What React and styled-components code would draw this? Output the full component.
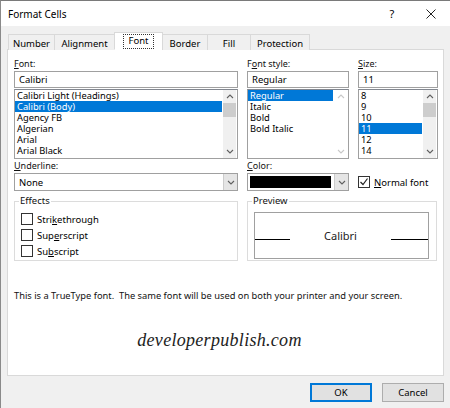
import React from "react";
import styled, { createGlobalStyle } from "styled-components";

const GlobalStyle = createGlobalStyle`
  html, body {
    margin: 0;
    padding: 0;
    background: #f0f0f0;
  }
  body {
    font-family: "Noto Sans", "DejaVu Sans", sans-serif;
    font-size: 9px;
    color: #000;
  }
`;

const Window = styled.div`
  width: 450px;
  height: 408px;
  box-sizing: border-box;
  border-top: 1px solid #7a7a7a;
  border-left: 1px solid #8a8a8a;
  background: #f0f0f0;
  display: flex;
  flex-direction: column;
`;

const TitleBar = styled.div`
  height: 25px;
  background: #fff;
  display: flex;
  align-items: center;
  padding: 0 12px 0 7px;
  font-size: 10px;
`;

const Title = styled.div`
  flex: 1;
`;

const TitleButton = styled.div`
  width: 14px;
  display: flex;
  justify-content: center;
  margin-left: ${(p) => p.gap || 0}px;
  font-size: 11px;
`;

const Body = styled.div`
  flex: 1;
  padding: 6px 6px 0 6px;
  display: flex;
  flex-direction: column;
`;

const TabStrip = styled.div`
  display: flex;
  align-items: flex-end;
  height: 18px;
  padding-left: 1px;
  position: relative;
  z-index: 1;
`;

const Tab = styled.div`
  width: ${(p) => p.w}px;
  height: ${(p) => (p.active ? 18 : 16)}px;
  box-sizing: border-box;
  border: 1px solid #d9d9d9;
  border-bottom: ${(p) => (p.active ? "1px solid #fff" : "none")};
  margin-right: -1px;
  background: ${(p) => (p.active ? "#fff" : "#f0f0f0")};
  display: flex;
  align-items: center;
  justify-content: center;
  font-size: 9.5px;
  padding-top: 1px;
`;

const FocusText = styled.span`
  outline: 1px dotted #333;
  outline-offset: 0;
  padding: 0 5px 1px;
  line-height: 12px;
`;

const Panel = styled.div`
  height: 327px;
  box-sizing: border-box;
  margin-top: -1px;
  background: #fff;
  border: 1px solid #d9d9d9;
  padding: 8px 6px 0 6px;
  display: flex;
  flex-direction: column;
`;

const Grid = styled.div`
  display: grid;
  grid-template-columns: 224px 102px 80px;
  column-gap: 9px;
  align-items: start;
`;

const Field = styled.div`
  display: flex;
  flex-direction: column;
`;

const Label = styled.div`
  height: 12px;
  line-height: 12px;
  margin-bottom: 1px;
  color: #111;
`;

const U = styled.span`
  text-decoration: underline;
`;

const TextBox = styled.div`
  height: 17px;
  box-sizing: border-box;
  border: 1px solid #a0a0a0;
  background: #fff;
  padding: 0 4px;
  display: flex;
  align-items: center;
  font-size: 9.5px;
`;

const ListBox = styled.div`
  margin-top: 1px;
  height: 70px;
  box-sizing: border-box;
  border: 1px solid #a0a0a0;
  border-top-color: #828790;
  background: #fff;
  display: flex;
`;

const Items = styled.div`
  flex: 1;
  overflow: hidden;
`;

const Item = styled.div`
  height: 11px;
  line-height: 11px;
  padding-left: 2px;
  font-size: 9.3px;
  background: ${(p) => (p.selected ? "#0078d7" : "transparent")};
  color: ${(p) => (p.selected ? "#fff" : "#000")};
  white-space: nowrap;
`;

const ScrollBar = styled.div`
  width: 13px;
  margin: 0 1px;
  background: ${(p) => (p.disabled ? "#fff" : "#f0f0f0")};
  display: flex;
  flex-direction: column;
  align-items: center;
`;

const ScrollArrow = styled.div`
  height: 13px;
  display: flex;
  align-items: center;
  justify-content: center;
`;

const Thumb = styled.div`
  width: 13px;
  height: 14px;
  background: #cdcdcd;
`;

const Track = styled.div`
  flex: 1;
`;

const Combo = styled.div`
  height: 18px;
  box-sizing: border-box;
  border: 1px solid #a0a0a0;
  background: #fff;
  display: flex;
  align-items: stretch;
  font-size: 9.5px;
`;

const ComboText = styled.div`
  flex: 1;
  display: flex;
  align-items: center;
  padding: ${(p) => (p.swatch ? "2px 3px 2px 2px" : "0 4px")};
`;

const Swatch = styled.div`
  flex: 1;
  align-self: stretch;
  background: #000;
`;

const DropButton = styled.div`
  width: 13px;
  background: #e5e5e5;
  border-left: 1px solid #cccccc;
  display: flex;
  align-items: center;
  justify-content: center;
`;

const SecondRow = styled(Grid)`
  margin-top: 1px;
`;

const CheckRow = styled.label`
  display: flex;
  align-items: center;
  gap: 4px;
  height: ${(p) => p.h || 16}px;
  font-size: 9.5px;
`;

const CheckBox = styled.span`
  width: 12px;
  height: 12px;
  box-sizing: border-box;
  border: 1px solid #333;
  background: #fff;
  display: flex;
  align-items: center;
  justify-content: center;
`;

const NormalFont = styled.div`
  padding-top: 13px;
`;

const Groups = styled.div`
  display: grid;
  grid-template-columns: 224px 190px;
  column-gap: 9px;
  margin-top: 4px;
`;

const Group = styled.fieldset`
  margin: 0;
  padding: 0 0 0 6px;
  height: 66px;
  box-sizing: border-box;
  border: 1px solid #dcdcdc;
  min-width: 0;
`;

const Legend = styled.legend`
  padding: 0 1px;
  margin-left: -2px;
  font-size: 9.5px;
  line-height: 12px;
  color: #111;
`;

const Effects = styled.div`
  padding-top: 4px;
  display: flex;
  flex-direction: column;
`;

const PreviewGroup = styled(Group)`
  padding: 0 7px 0 6px;
`;

const PreviewBox = styled.div`
  margin-top: 5px;
  height: 47px;
  box-sizing: border-box;
  border: 1px solid #a0a0a0;
  display: grid;
  grid-template-columns: 35px 1fr 37px;
  align-items: center;
`;

const BaseLine = styled.div`
  height: 1px;
  background: #000;
  margin-top: 8px;
`;

const PreviewText = styled.div`
  text-align: center;
  font-size: 11px;
  color: #222;
`;

const Note = styled.div`
  margin-top: 28px;
  font-size: 9.3px;
  color: #111;
  white-space: nowrap;
`;

const Watermark = styled.div`
  margin-top: 28px;
  text-align: center;
  padding-right: 12px;
  font-family: "Liberation Serif", serif;
  font-style: italic;
  font-size: 18px;
  letter-spacing: 0.3px;
  color: #222;
`;

const Footer = styled.div`
  display: flex;
  justify-content: flex-end;
  gap: 10px;
  padding-top: 7px;
`;

const Button = styled.div`
  width: 62px;
  height: 19px;
  box-sizing: border-box;
  border: ${(p) => (p.primary ? "2px solid #0078d7" : "1px solid #adadad")};
  background: #e1e1e1;
  display: flex;
  align-items: center;
  justify-content: center;
  font-size: 9.5px;
`;

const Chevron = ({ dir = "down", color = "#606060" }) => (
  <svg width="8" height="5" viewBox="0 0 8 5">
    <polyline
      points={dir === "down" ? "1,1 4,4 7,1" : "1,4 4,1 7,4"}
      fill="none"
      stroke={color}
      strokeWidth="1.1"
    />
  </svg>
);

const Scroll = ({ disabled }) => {
  const c = disabled ? "#c8c8c8" : "#606060";
  return (
    <ScrollBar disabled={disabled}>
      <ScrollArrow>
        <Chevron dir="up" color={c} />
      </ScrollArrow>
      {!disabled && <Thumb />}
      <Track />
      <ScrollArrow>
        <Chevron dir="down" color={c} />
      </ScrollArrow>
    </ScrollBar>
  );
};

const List = ({ items, selected, disabled }) => (
  <ListBox>
    <Items>
      {items.map((it) => (
        <Item key={it} selected={it === selected}>
          {it}
        </Item>
      ))}
    </Items>
    <Scroll disabled={disabled} />
  </ListBox>
);

const Check = ({ checked }) => (
  <CheckBox>
    {checked && (
      <svg width="10" height="10" viewBox="0 0 10 10">
        <polyline points="1.5,5 4,7.5 8.5,1.5" fill="none" stroke="#222" strokeWidth="1.2" />
      </svg>
    )}
  </CheckBox>
);

const tabs = [
  ["Number", 47],
  ["Alignment", 61],
  ["Font", 49],
  ["Border", 46],
  ["Fill", 44],
  ["Protection", 60],
];

export default function App() {
  return (
    <>
      <GlobalStyle />
      <Window>
        <TitleBar>
          <Title>Format Cells</Title>
          <TitleButton>?</TitleButton>
          <TitleButton gap={25}>
            <svg width="10" height="10" viewBox="0 0 10 10">
              <path d="M0.5 0.5 L9.5 9.5 M9.5 0.5 L0.5 9.5" stroke="#222" strokeWidth="1" />
            </svg>
          </TitleButton>
        </TitleBar>
        <Body>
          <TabStrip>
            {tabs.map(([name, w]) => (
              <Tab key={name} w={w} active={name === "Font"}>
                {name === "Font" ? <FocusText>{name}</FocusText> : name}
              </Tab>
            ))}
          </TabStrip>
          <Panel>
            <Grid>
              <Field>
                <Label>
                  <U>F</U>ont:
                </Label>
                <TextBox>Calibri</TextBox>
                <List
                  items={[
                    "Calibri Light (Headings)",
                    "Calibri (Body)",
                    "Agency FB",
                    "Algerian",
                    "Arial",
                    "Arial Black",
                  ]}
                  selected="Calibri (Body)"
                />
              </Field>
              <Field>
                <Label>
                  F<U>o</U>nt style:
                </Label>
                <TextBox>Regular</TextBox>
                <List items={["Regular", "Italic", "Bold", "Bold Italic"]} selected="Regular" disabled />
              </Field>
              <Field>
                <Label>
                  <U>S</U>ize:
                </Label>
                <TextBox>11</TextBox>
                <List items={["8", "9", "10", "11", "12", "14"]} selected="11" />
              </Field>
            </Grid>
            <SecondRow>
              <Field>
                <Label>
                  <U>U</U>nderline:
                </Label>
                <Combo>
                  <ComboText>None</ComboText>
                  <DropButton>
                    <Chevron />
                  </DropButton>
                </Combo>
              </Field>
              <Field>
                <Label>
                  <U>C</U>olor:
                </Label>
                <Combo>
                  <ComboText swatch>
                    <Swatch />
                  </ComboText>
                  <DropButton>
                    <Chevron />
                  </DropButton>
                </Combo>
              </Field>
              <NormalFont>
                <CheckRow h={18}>
                  <Check checked />
                  <span>
                    <U>N</U>ormal font
                  </span>
                </CheckRow>
              </NormalFont>
            </SecondRow>
            <Groups>
              <Group>
                <Legend>Effects</Legend>
                <Effects>
                  <CheckRow>
                    <Check />
                    <span>
                      Stri<U>k</U>ethrough
                    </span>
                  </CheckRow>
                  <CheckRow>
                    <Check />
                    <span>
                      Sup<U>e</U>rscript
                    </span>
                  </CheckRow>
                  <CheckRow>
                    <Check />
                    <span>
                      Su<U>b</U>script
                    </span>
                  </CheckRow>
                </Effects>
              </Group>
              <PreviewGroup>
                <Legend>Preview</Legend>
                <PreviewBox>
                  <BaseLine />
                  <PreviewText>Calibri</PreviewText>
                  <BaseLine />
                </PreviewBox>
              </PreviewGroup>
            </Groups>
            <Note>
              This is a TrueType font.&nbsp; The same font will be used on both your printer and your screen.
            </Note>
            <Watermark>developerpublish.com</Watermark>
          </Panel>
          <Footer>
            <Button primary>OK</Button>
            <Button>Cancel</Button>
          </Footer>
        </Body>
      </Window>
    </>
  );
}
